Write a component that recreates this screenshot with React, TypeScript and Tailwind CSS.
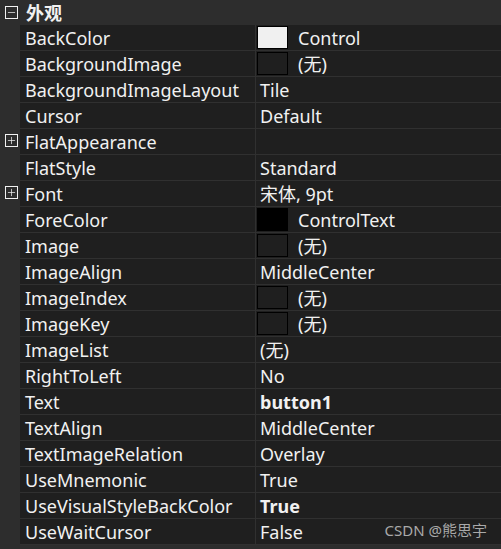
import { Minus, Plus } from "lucide-react";

type Prop = {
  name: string;
  value: string;
  expand?: boolean;
  swatch?: string;
  bold?: boolean;
};

const props: Prop[] = [
  { name: "BackColor", value: "Control", swatch: "bg-[#f0f0f0]" },
  { name: "BackgroundImage", value: "(无)", swatch: "bg-[#1f1f1f]" },
  { name: "BackgroundImageLayout", value: "Tile" },
  { name: "Cursor", value: "Default" },
  { name: "FlatAppearance", value: "", expand: true },
  { name: "FlatStyle", value: "Standard" },
  { name: "Font", value: "宋体, 9pt", expand: true },
  { name: "ForeColor", value: "ControlText", swatch: "bg-black" },
  { name: "Image", value: "(无)", swatch: "bg-[#1f1f1f]" },
  { name: "ImageAlign", value: "MiddleCenter" },
  { name: "ImageIndex", value: "(无)", swatch: "bg-[#1f1f1f]" },
  { name: "ImageKey", value: "(无)", swatch: "bg-[#1f1f1f]" },
  { name: "ImageList", value: "(无)" },
  { name: "RightToLeft", value: "No" },
  { name: "Text", value: "button1", bold: true },
  { name: "TextAlign", value: "MiddleCenter" },
  { name: "TextImageRelation", value: "Overlay" },
  { name: "UseMnemonic", value: "True" },
  { name: "UseVisualStyleBackColor", value: "True", bold: true },
  { name: "UseWaitCursor", value: "False" },
];

const Box = ({ open }: { open?: boolean }) => (
  <div className="flex h-[13px] w-[13px] items-center justify-center border border-[#f1f1f1]">
    {open ? (
      <Minus size={13} strokeWidth={1.6} className="text-[#f1f1f1]" />
    ) : (
      <Plus size={13} strokeWidth={1.6} className="text-[#f1f1f1]" />
    )}
  </div>
);

export default function App() {
  return (
    <div className="relative h-[549px] w-[501px] overflow-hidden bg-[#2d2d2d] font-['Noto_Sans','Noto_Sans_CJK_SC',sans-serif] text-[18px] text-[#f1f1f1]">
      {/* Category header */}
      <div className="flex h-[25px] items-center">
        <div className="flex w-[20px] justify-center pl-[3px]">
          <Box open />
        </div>
        <span className="pl-[6px] font-bold leading-none">外观</span>
      </div>

      {/* Rows */}
      {props.map((p) => (
        <div key={p.name} className="flex h-[26px]">
          <div className="flex w-[20px] items-start justify-center pt-[5px] pl-[3px]">
            {p.expand && <Box />}
          </div>
          <div className="flex flex-1 border-b border-[#303030] bg-[#1f1f1f]">
            <div className="flex w-[236px] items-center border-r border-[#303030] pl-[5px] leading-none">
              {p.name}
            </div>
            <div className="flex flex-1 items-center pl-[4px] leading-none">
              {p.swatch && (
                <div className={`-ml-[3px] mr-[10px] h-[23px] w-[31px] border border-black ${p.swatch}`} />
              )}
              <span className={p.bold ? "font-bold" : ""}>{p.value}</span>
            </div>
          </div>
        </div>
      ))}

      <span className="absolute right-[14px] bottom-[8px] text-[15px] text-[#a9a9a9]">
        CSDN @熊思宇
      </span>
    </div>
  );
}
